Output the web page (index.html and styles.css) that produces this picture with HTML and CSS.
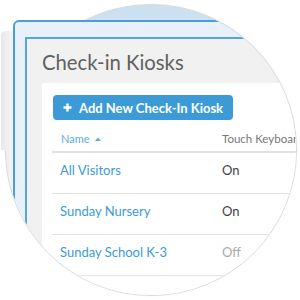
FILE: index.html
```html
<!DOCTYPE html>
<html>
<head>
<meta charset="utf-8">
<link rel="stylesheet" href="styles.css">
</head>
<body>
<div class="stage">
  <div class="layer back-layer"><div class="back-card"></div></div>
  <div class="layer circle-layer"><div class="circle"></div></div>
  <div class="layer front-layer">
    <div class="card">
      <div class="frame">
        <h1 class="title">Check-in Kiosks</h1>
        <div class="panel">
          <button class="btn" type="button">
            <svg class="plus" width="9" height="9" viewBox="0 0 9 9"><path d="M4.5 0.5V8.5M0.5 4.5H8.5" stroke="#fff" stroke-width="2.4" fill="none"/></svg>
            <span>Add New Check-In Kiosk</span>
          </button>
          <table class="kiosks">
            <thead>
              <tr>
                <th class="col-name"><span class="sort">Name</span><svg class="arrow" width="6" height="4" viewBox="0 0 6 4"><path d="M0 4L3 0.5L6 4Z" fill="#5aaee3"/></svg></th>
                <th class="col-kb">Touch Keyboard</th>
              </tr>
            </thead>
            <tbody>
              <tr><td class="col-name"><span class="link">All Visitors</span></td><td class="col-kb on">On</td></tr>
              <tr><td class="col-name"><span class="link">Sunday Nursery</span></td><td class="col-kb on">On</td></tr>
              <tr><td class="col-name"><span class="link">Sunday School K-3</span></td><td class="col-kb off">Off</td></tr>
              <tr><td class="col-name"><span class="link">&nbsp;</span></td><td class="col-kb"></td></tr>
            </tbody>
          </table>
        </div>
      </div>
    </div>
  </div>
</div>
</body>
</html>
```

FILE: styles.css
```css
html, body {
  margin: 0;
  padding: 0;
  background: #ffffff;
}
body {
  font-family: Lato, "Open Sans", "Liberation Sans", sans-serif;
}
.stage {
  width: 300px;
  height: 300px;
  overflow: hidden;
  display: grid;
  background: #ffffff;
}
.layer {
  grid-area: 1 / 1;
  width: 300px;
  height: 300px;
  overflow: hidden;
}
.back-layer,
.front-layer {
  clip-path: path("M0 0 H151 V5 A145 145 0 1 1 6 150 H0 Z");
}
.back-card {
  margin: 31px 0 0 1px;
  width: 220px;
  height: 200px;
  border-radius: 5px;
  background: linear-gradient(90deg, #e6e6e6 0, #efefef 6px, #f4f4f4 12px);
  box-shadow: 0 0 2px rgba(0, 0, 0, 0.06);
}
.circle {
  margin: 4px 0 0 5px;
  width: 292px;
  height: 292px;
  box-sizing: border-box;
  border: 1px solid #d9d9d9;
  border-radius: 50%;
  background: linear-gradient(180deg, #cbe0f1 0%, #d6e7f4 30%, #e2edf7 55%, #e9f2fa 75%, #f5f9fc 100%);
  box-shadow: 0 0 2px rgba(0, 0, 0, 0.05);
}
.card {
  margin: 20px 0 0 13px;
  width: 330px;
  height: 330px;
  box-sizing: border-box;
  border: 2px solid #4b9fd8;
  border-radius: 6px;
  background: #e8f1fa;
  padding: 15px 0 0 10px;
}
.frame {
  height: 100%;
  box-sizing: border-box;
  border: 2px solid #55a6dc;
  border-right: none;
  border-bottom: none;
  background: #f1f1f1;
  padding: 11px 0 0 15px;
}
.title {
  margin: 0 0 9px 0;
  font-weight: 400;
  font-size: 20.3px;
  line-height: 24px;
  color: #606060;
  letter-spacing: 0;
}
.panel {
  background: #ffffff;
  height: 100%;
  padding: 12px 0 0 10px;
}
.btn {
  margin: 0 0 0 1px;
  width: 180px;
  height: 25px;
  box-sizing: border-box;
  border: none;
  border-radius: 4px;
  background: #3c9bd7;
  color: #ffffff;
  font-family: Lato, "Open Sans", sans-serif;
  font-weight: 700;
  font-size: 13px;
  display: flex;
  align-items: center;
  gap: 7px;
  padding: 0 0 0 10px;
}
.plus {
  display: block;
}
.kiosks {
  margin-top: 12px;
  width: 300px;
  border-collapse: collapse;
  table-layout: fixed;
}
.kiosks th {
  text-align: left;
  font-weight: 400;
  font-size: 11px;
  line-height: 14px;
  padding: 0 0 5px 9px;
  border-bottom: 2px solid #e1e1e1;
}
.kiosks th.col-name {
  color: #5aaee3;
}
.kiosks th.col-kb {
  color: #777777;
  font-size: 11.5px;
}
.arrow {
  margin-left: 5px;
  vertical-align: 2px;
}
.col-name {
  width: 161px;
  box-sizing: border-box;
}
.kiosks td {
  height: 41px;
  box-sizing: border-box;
  padding: 0 0 5px 9px;
  font-size: 13px;
  line-height: 16px;
  vertical-align: middle;
  border-bottom: 1px solid #e3e3e3;
}
.kiosks td.col-name {
  padding-left: 8px;
}
.link {
  color: #3d9ad8;
}
.on {
  color: #444444;
}
.off {
  color: #aaaaaa;
}
```
